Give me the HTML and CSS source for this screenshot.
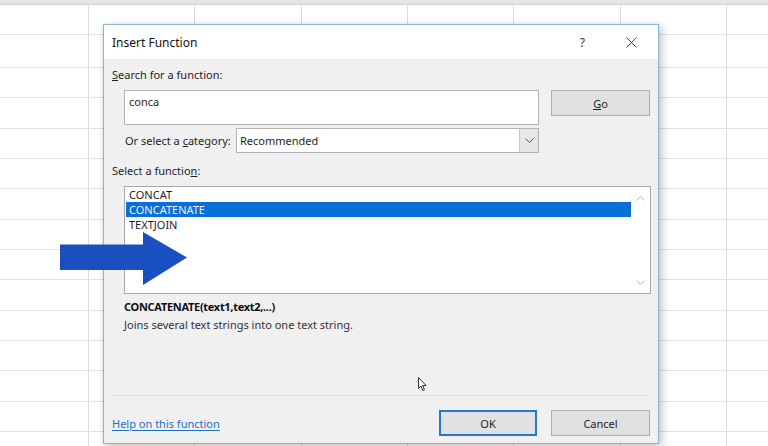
FILE: index.html
```html
<!DOCTYPE html>
<html>
<head>
<meta charset="utf-8">
<link rel="stylesheet" href="styles.css">
</head>
<body>
<div class="dialog">
  <div class="titlebar">
    <span class="title">Insert Function</span>
    <span class="help">?</span>
    <svg class="close" width="11" height="11" viewBox="0 0 11 11"><path d="M0.5 0.5 L10.5 10.5 M10.5 0.5 L0.5 10.5" stroke="#444" stroke-width="1" fill="none"/></svg>
  </div>
  <div class="dbody">
    <div class="label"><u>S</u>earch for a function:</div>
    <div class="search-row">
      <div class="textbox">conca</div>
      <div class="btn go"><u>G</u>o</div>
    </div>
    <div class="cat-row">
      <div class="cat-label">Or select a <u>c</u>ategory:</div>
      <div class="select">
        <span class="select-val">Recommended</span>
        <span class="select-btn"><svg width="9" height="6" viewBox="0 0 9 6"><path d="M0.5 0.5 L4.5 4.5 L8.5 0.5" stroke="#555" stroke-width="1" fill="none"/></svg></span>
      </div>
    </div>
    <div class="label label2">Select a functio<u>n</u>:</div>
    <div class="listbox">
      <div class="items">
        <div class="item">CONCAT</div>
        <div class="item sel">CONCATENATE</div>
        <div class="item">TEXTJOIN</div>
      </div>
      <div class="scroll">
        <svg width="9" height="6" viewBox="0 0 9 6"><path d="M0.5 5.5 L4.5 1.5 L8.5 5.5" stroke="#b5b5b5" stroke-width="1" fill="none"/></svg>
        <svg width="9" height="6" viewBox="0 0 9 6"><path d="M0.5 0.5 L4.5 4.5 L8.5 0.5" stroke="#b5b5b5" stroke-width="1" fill="none"/></svg>
      </div>
    </div>
    <div class="syntax">CONCATENATE(text1,text2,...)</div>
    <div class="desc">Joins several text strings into one text string.</div>
    <div class="sep"></div>
    <div class="bottom-row">
      <a class="link">Help on this function</a>
      <div class="btns">
        <div class="btn ok">OK</div>
        <div class="btn cancel">Cancel</div>
      </div>
    </div>
  </div>
</div>

<svg class="arrow" width="128" height="56" viewBox="0 0 128 56"><path d="M0 12.5 H83 V0 L127 25.5 L83 53 V38 H0 Z" fill="#1a4fc0"/></svg>

<svg class="cursor" width="10" height="15" viewBox="0 0 10 15"><path d="M0.5 0.5 L0.5 11.5 L3 9 L5 13.5 L6.5 12.8 L4.6 8.5 L8 8.5 Z" fill="#fff" stroke="#333" stroke-width="1" stroke-linejoin="round"/></svg>
</body>
</html>
```

FILE: styles.css
```css
html, body {
  margin: 0;
  padding: 0;
}
body {
  width: 768px;
  height: 446px;
  overflow: hidden;
  position: relative;
  font-family: "Noto Sans", "Open Sans", sans-serif;
  font-size: 11px;
  color: #1e1e1e;
  background:
    linear-gradient(#e4e4e4, #e4e4e4) 0 0 / 100% 4px no-repeat,
    linear-gradient(#cfcfcf, #cfcfcf) 0 4px / 100% 1px no-repeat,
    linear-gradient(#e2e2e2, #e2e2e2) 0 34px / 100% 1px no-repeat,
    repeating-linear-gradient(to bottom, #e2e2e2 0 1px, transparent 1px 30.333px) 0 67px / 100% 400px no-repeat,
    repeating-linear-gradient(to right, #dadada 0 1px, transparent 1px 106.333px) 88px 0 / 700px 100% no-repeat,
    #ffffff;
}

.dialog {
  position: absolute;
  left: 103px;
  top: 24px;
  width: 554px;
  height: 418px;
  border: 1px solid #86b6db;
  background: #f0f0f0;
  box-shadow: 3px 3px 9px rgba(0,0,0,0.22), 0 0 4px rgba(0,0,0,0.08);
  display: flex;
  flex-direction: column;
}
.titlebar {
  height: 34px;
  background: #ffffff;
  display: flex;
  align-items: center;
  padding-left: 8px;
  flex-shrink: 0;
}
.title {
  font-size: 12px;
  color: #111;
  flex: 1;
}
.help {
  font-size: 12px;
  color: #333;
  margin-right: 41px;
}
.close {
  margin-right: 21px;
}
.dbody {
  padding: 0 8px;
  display: flex;
  flex-direction: column;
}
.label {
  line-height: 16px;
  height: 16px;
  margin-top: 8px;
}
u { text-decoration: underline; text-underline-offset: 1px; }
.search-row {
  display: flex;
  align-items: flex-start;
  margin-top: 7px;
  padding-left: 12px;
}
.textbox {
  background: #fff;
  border: 1px solid #b4b4b4;
  padding: 2px 4px;
  box-sizing: border-box;
  height: 35px;
  width: 415px;
  line-height: 18px;
}
.btn {
  background: #e1e1e1;
  border: 1px solid #adadad;
  box-sizing: border-box;
  display: flex;
  align-items: center;
  justify-content: center;
}
.go {
  margin-left: 12px;
  width: 99px;
  height: 26px;
}
.cat-row {
  display: flex;
  align-items: center;
  margin-top: 3px;
  height: 25px;
  padding-left: 12px;
}
.cat-label {
  width: 112px;
  padding-left: 1px;
  box-sizing: border-box;
}
.select {
  width: 303px;
  height: 25px;
  box-sizing: border-box;
  border: 1px solid #b4b4b4;
  background: #fff;
  display: flex;
  align-items: stretch;
}
.select-val {
  flex: 1;
  padding-left: 3px;
  line-height: 23px;
}
.select-btn {
  width: 18px;
  background: #e6e6e6;
  border-left: 1px solid #c8c8c8;
  display: flex;
  align-items: center;
  justify-content: center;
}
.label2 {
  margin-top: 10px;
}
.listbox {
  margin-top: 7px;
  margin-left: 12px;
  width: 527px;
  height: 108px;
  box-sizing: border-box;
  border: 1px solid #a8a8a8;
  background: #fff;
  display: flex;
}
.items {
  flex: 1;
  padding: 0 0 0 1px;
}
.item {
  height: 15px;
  line-height: 15px;
  padding-left: 3px;
  color: #1e1e1e;
}
.item.sel {
  background: #0a6fd6;
  color: #e8f1fc;
}
.scroll {
  width: 19px;
  display: flex;
  flex-direction: column;
  justify-content: space-between;
  align-items: center;
  padding: 8px 0 7px;
  box-sizing: border-box;
}
.syntax {
  margin-top: 5px;
  margin-left: 12px;
  line-height: 16px;
  font-weight: bold;
  letter-spacing: -0.3px;
  color: #111;
}
.desc {
  margin-top: 2px;
  margin-left: 12px;
  line-height: 16px;
  color: #333;
}
.sep {
  margin-top: 62px;
  height: 1px;
  background: #dfdfdf;
}
.bottom-row {
  margin-top: 14px;
  display: flex;
  align-items: center;
  justify-content: space-between;
}
.link {
  color: #1c6fc7;
  text-decoration: underline;
  text-underline-offset: 2px;
}
.btns {
  display: flex;
  gap: 14px;
}
.ok {
  width: 98px;
  height: 26px;
  border: 2px solid #1f7ad6;
}
.cancel {
  width: 99px;
  height: 26px;
}
.arrow {
  position: absolute;
  left: 60px;
  top: 232px;
}
.cursor {
  position: absolute;
  left: 418px;
  top: 377px;
}
```
